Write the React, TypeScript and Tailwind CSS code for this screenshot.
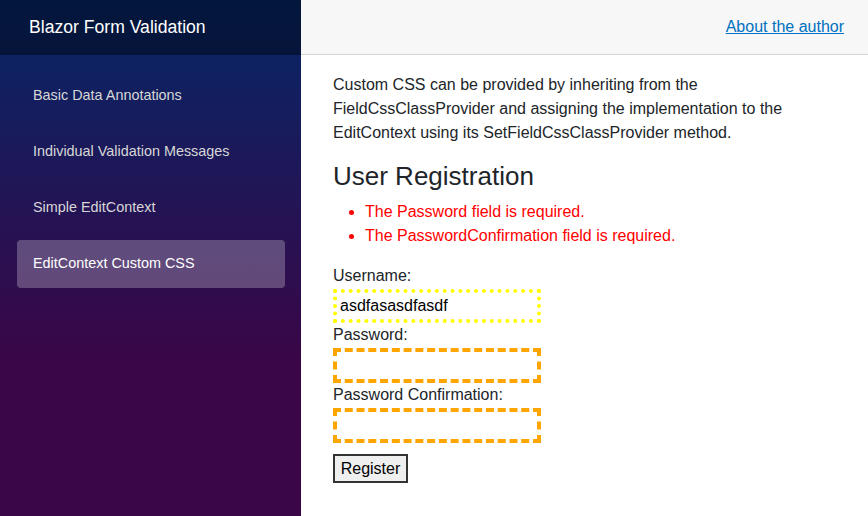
import React from 'react'

const NAV_ITEMS = [
  { label: 'Basic Data Annotations', active: false },
  { label: 'Individual Validation Messages', active: false },
  { label: 'Simple EditContext', active: false },
  { label: 'EditContext Custom CSS', active: true },
]

const ERRORS = [
  'The Password field is required.',
  'The PasswordConfirmation field is required.',
]

export default function App() {
  return (
    <div className="flex h-[516px] w-[868px] overflow-hidden bg-white font-['Liberation_Sans',Arial,sans-serif] text-[#212529]">
      {/* sidebar */}
      <aside className="flex w-[301px] shrink-0 flex-col bg-[linear-gradient(180deg,rgb(5,39,103)_0%,#3a0647_70%)]">
        <div className="flex h-[55px] shrink-0 items-center bg-black/40 pl-[29px]">
          <span className="text-[17.6px] text-white">Blazor Form Validation</span>
        </div>
        <nav className="flex flex-col gap-2 px-4 pl-[17px] pt-[17px]">
          {NAV_ITEMS.map((item) => (
            <a
              key={item.label}
              className={
                'flex h-12 items-center rounded px-4 text-[14.4px] ' +
                (item.active ? 'bg-white/25 text-white' : 'text-[#d7d7d7]')
              }
            >
              {item.label}
            </a>
          ))}
        </nav>
      </aside>

      {/* main */}
      <main className="flex min-w-0 flex-1 flex-col">
        <div className="flex h-[55px] shrink-0 items-center justify-end border-b border-[#d6d5d5] bg-[#f7f7f7] px-6">
          <a className="text-base text-[#0071c1] underline">About the author</a>
        </div>

        <div className="pl-8 pr-6 pt-[18px]">
          <p className="mb-4 text-base leading-6">
            Custom CSS can be provided by inheriting from the FieldCssClassProvider and assigning the
            implementation to the EditContext using its SetFieldCssClassProvider method.
          </p>

          <h3 className="mb-2 text-[26px] leading-[1.2]">User Registration</h3>

          <ul className="mb-4 list-disc pl-8 text-base leading-6 text-[red]">
            {ERRORS.map((e) => (
              <li key={e}>{e}</li>
            ))}
          </ul>

          <div className="text-base leading-6">Username:</div>
          <input
            defaultValue="asdfasasdfasdf"
            className="mt-px block h-[34px] w-[208px] border-4 border-dotted border-[yellow] px-[3px] text-base text-black outline-none"
          />
          <div className="text-base leading-6">Password:</div>
          <input
            type="password"
            className="mt-px block h-[35px] w-[208px] border-4 border-dashed border-[orange] px-[3px] text-base outline-none"
          />
          <div className="text-base leading-6">Password Confirmation:</div>
          <input
            type="password"
            className="mt-px block h-[35px] w-[208px] border-4 border-dashed border-[orange] px-[3px] text-base outline-none"
          />
          <button className="mt-[11px] block h-[29px] w-[75px] border-2 border-[#333] bg-[#efefef] text-base text-black">
            Register
          </button>
        </div>
      </main>
    </div>
  )
}
